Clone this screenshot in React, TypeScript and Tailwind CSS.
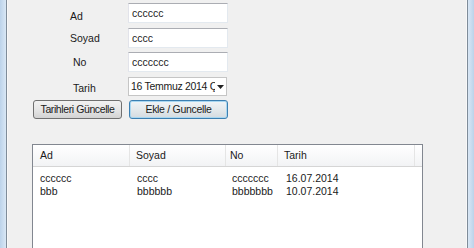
import React from "react";

const font = { fontFamily: '"Liberation Sans", Arial, sans-serif' };

function TextBox({ value }: { value: string }) {
  return (
    <div className="w-[100px] h-[20px] bg-white border border-[#abadb3] border-r-[#e3e9ef] border-b-[#e3e9ef] border-l-[#e2e3ea] flex items-center pl-[3px] text-[10.5px] text-[#1a1a1a] leading-none">
      {value}
    </div>
  );
}

export default function App() {
  const rows = [
    ["cccccc", "cccc", "ccccccc", "16.07.2014"],
    ["bbb", "bbbbbb", "bbbbbbb", "10.07.2014"],
  ];
  return (
    <div className="w-[474px] h-[248px] flex overflow-hidden bg-[#f0f0f0]" style={font}>
      <div className="w-[6px] h-full bg-gradient-to-r from-[#bcd3ea] to-[#d9e7f5]" />
      <div className="w-[1px] h-full bg-[#7f8c99]" />
      <div className="w-[1px] h-full bg-[#f8f8f8]" />
      <div className="flex-1 flex flex-col text-[10.5px] text-[#1a1a1a] leading-none">
        {/* form rows */}
        <div className="flex items-center mt-[3px] h-[20px]">
          <div className="w-[120px] pl-[62px] pt-[6px]">Ad</div>
          <TextBox value="cccccc" />
        </div>
        <div className="flex items-center mt-[5px] h-[20px]">
          <div className="w-[120px] pl-[62px] pt-[1px]">Soyad</div>
          <TextBox value="cccc" />
        </div>
        <div className="flex items-center mt-[4px] h-[20px]">
          <div className="w-[120px] pl-[65px] pt-[1px]">No</div>
          <TextBox value="ccccccc" />
        </div>
        <div className="flex items-center mt-[5px] h-[19px]">
          <div className="w-[120px] pl-[65px] pt-[4px]">Tarih</div>
          <div className="w-[99px] h-[19px] bg-white border border-[#c5c5c5] flex items-center">
            <div className="flex-1 overflow-hidden whitespace-nowrap pl-[2px] text-[10.5px] tracking-[-0.3px]">
              16 Temmuz 2014 Çarşamba
            </div>
            <div className="w-[11px] flex items-center justify-center">
              <svg width="7" height="4" viewBox="0 0 7 4">
                <path d="M0 0 H7 L3.5 4 Z" fill="#222" />
              </svg>
            </div>
          </div>
        </div>
        <div className="flex items-center mt-[4px] h-[19px]">
          <div className="ml-[25px] w-[89px] h-[19px] rounded-[3px] border border-[#707070] bg-gradient-to-b from-[#f2f2f2] via-[#e6e6e6] to-[#d3d3d3] flex items-center justify-center text-[10.5px] tracking-[-0.4px]">
            Tarihleri Güncelle
          </div>
          <div className="ml-[7px] w-[99px] h-[19px] rounded-[3px] border border-[#3c7fb1] shadow-[inset_0_0_0_1px_#a9d7f1] bg-gradient-to-b from-[#f0f4f7] via-[#e4e9ec] to-[#d4dbe0] flex items-center justify-center text-[10.5px] tracking-[-0.3px]">
            Ekle / Guncelle
          </div>
        </div>
        {/* list view */}
        <div className="ml-[24px] mt-[25px] w-[391px] flex-1 bg-white border border-[#828790] border-b-0 flex flex-col">
          <div className="h-[22px] flex bg-gradient-to-b from-white to-[#f2f3f5] border-b border-[#d5d5d5]">
            <div className="w-[97px] pl-[7px] flex items-center border-r border-[#e5e5e5]">Ad</div>
            <div className="w-[96px] pl-[6px] flex items-center border-r border-[#e5e5e5]">Soyad</div>
            <div className="w-[52px] pl-[4px] flex items-center border-r border-[#e5e5e5]">No</div>
            <div className="w-[137px] pl-[6px] flex items-center border-r border-[#e5e5e5]">Tarih</div>
            <div className="flex-1" />
          </div>
          <div className="pt-[5px] flex flex-col">
            {rows.map((r, i) => (
              <div key={i} className="h-[13px] flex items-center">
                <div className="w-[98px] pl-[7px]">{r[0]}</div>
                <div className="w-[97px] pl-[6px]">{r[1]}</div>
                <div className="w-[53px] pl-[4px]">{r[2]}</div>
                <div className="pl-[5px]">{r[3]}</div>
              </div>
            ))}
          </div>
        </div>
      </div>
      <div className="w-[1px] h-full bg-[#f8f8f8]" />
      <div className="w-[1px] h-full bg-[#7f8c99]" />
      <div className="w-[6px] h-full bg-gradient-to-r from-[#d9e7f5] to-[#bcd3ea]" />
    </div>
  );
}
